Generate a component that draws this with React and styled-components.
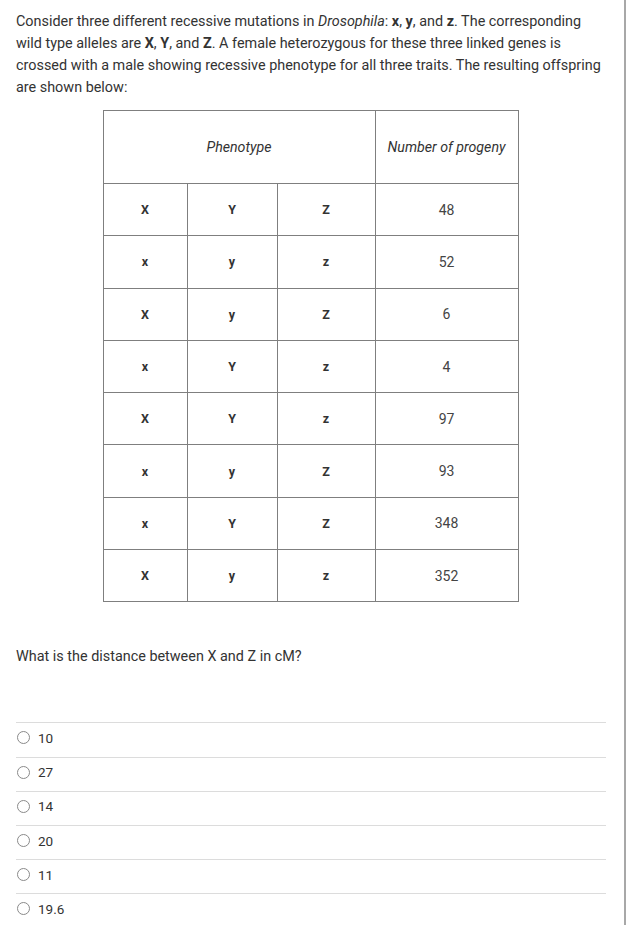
import React from "react";
import styled, { createGlobalStyle } from "styled-components";

const GlobalStyle = createGlobalStyle`
  body {
    margin: 0;
    background: #fff;
    font-family: Roboto, "Liberation Sans", Arial, sans-serif;
    color: #333;
  }
`;

const rows = [
  ["X", "Y", "Z", 48],
  ["x", "y", "z", 52],
  ["X", "y", "Z", 6],
  ["x", "Y", "z", 4],
  ["X", "Y", "z", 97],
  ["x", "y", "Z", 93],
  ["x", "Y", "Z", 348],
  ["X", "y", "z", 352],
];

const options = ["10", "27", "14", "20", "11", "19.6"];

const App = () => {
  return (
    <Page>
      <GlobalStyle />
      <Intro>
        Consider three different recessive mutations in <em>Drosophila</em>:{" "}
        <b>x</b>, <b>y</b>, and <b>z</b>. The corresponding wild type alleles
        are <b>X</b>, <b>Y</b>, and <b>Z</b>. A female heterozygous for these
        three linked genes is crossed with a male showing recessive phenotype
        for all three traits. The resulting offspring are shown below:
      </Intro>
      <TableWrap>
        <Table>
          <colgroup>
            <col style={{ width: 84 }} />
            <col style={{ width: 90 }} />
            <col style={{ width: 98 }} />
            <col style={{ width: 143 }} />
          </colgroup>
          <thead>
            <tr>
              <HeadCell colSpan={3}>Phenotype</HeadCell>
              <HeadCell>Number of progeny</HeadCell>
            </tr>
          </thead>
          <tbody>
            {rows.map((r, i) => (
              <tr key={i}>
                <Cell bold>{r[0]}</Cell>
                <Cell bold>{r[1]}</Cell>
                <Cell bold>{r[2]}</Cell>
                <Cell>{r[3]}</Cell>
              </tr>
            ))}
          </tbody>
        </Table>
      </TableWrap>
      <Question>What is the distance between X and Z in cM?</Question>
      <Options>
        {options.map((o) => (
          <Option key={o}>
            <Radio />
            <span>{o}</span>
          </Option>
        ))}
      </Options>
    </Page>
  );
};

export default App;

const Page = styled.div`
  width: 626px;
  min-height: 925px;
  box-sizing: border-box;
  padding: 11px 19px 0 16px;
  border-right: 2px solid #a8a8a8;
`;

const Intro = styled.p`
  margin: 0;
  font-size: 14.4px;
  line-height: 22px;
  color: #333;
  b {
    font-weight: 700;
  }
`;

const TableWrap = styled.div`
  display: flex;
  justify-content: center;
  margin-top: 11px;
`;

const Table = styled.table`
  border-collapse: collapse;
  table-layout: fixed;
  width: 416px;
  td,
  th {
    border: 1px solid #7f7f7f;
    text-align: center;
    padding: 0;
  }
`;

const HeadCell = styled.th`
  height: 72px;
  font-size: 14.2px;
  font-style: italic;
  font-weight: 400;
  color: #333;
`;

const Cell = styled.td`
  height: 51.3px;
  font-size: ${(p) => (p.bold ? "12.5px" : "14px")};
  font-weight: ${(p) => (p.bold ? 700 : 400)};
  color: ${(p) => (p.bold ? "#333" : "#444")};
`;

const Question = styled.p`
  margin: 44px 0 0;
  font-size: 14.4px;
  line-height: 22px;
`;

const Options = styled.div`
  margin-top: 54px;
  width: 590px;
`;

const Option = styled.div`
  display: flex;
  align-items: center;
  gap: 8px;
  height: 34.2px;
  box-sizing: border-box;
  border-top: 1px solid #dcdcdc;
  padding: 0 0 4px 1px;
  font-size: 13.5px;
  color: #333;
`;

const Radio = styled.span`
  width: 13px;
  height: 13px;
  border-radius: 50%;
  border: 1px solid #8a8a8a;
  box-sizing: border-box;
`;
